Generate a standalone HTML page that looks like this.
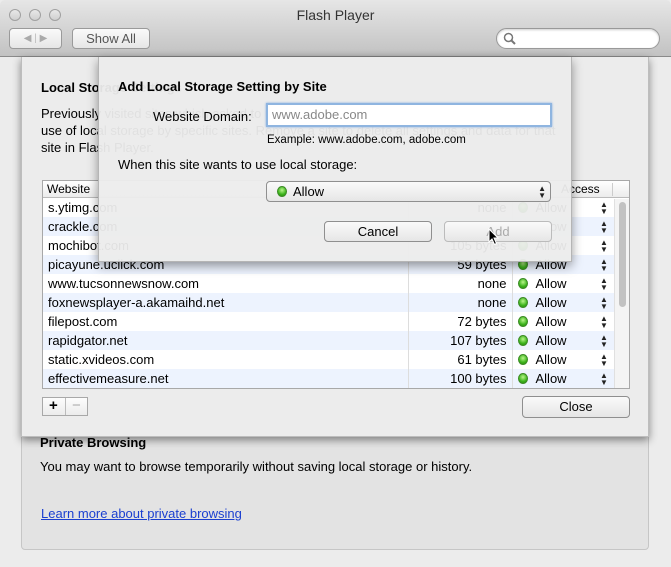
<!DOCTYPE html>
<html><head><meta charset="utf-8"><style>
*{box-sizing:border-box;margin:0;padding:0}
body{width:671px;height:567px;overflow:hidden;background:#ececec;font-family:"Liberation Sans",sans-serif;font-size:13px;color:#000;position:relative}
.abs{position:absolute}
#title{left:0;top:0;width:671px;height:57px;background:linear-gradient(#e6e6e6,#c2c2c2);border-bottom:1px solid #8a8a8a;border-radius:5px 5px 0 0}
.light{width:12px;height:12px;border-radius:50%;border:1px solid #a0a0a0;background:linear-gradient(#e8e8e8,#cfcfcf);top:9px}
.btn{border:1px solid #9a9a9a;border-radius:4px;background:linear-gradient(#fafafa,#e6e6e6);text-align:center}
#group{left:21px;top:60px;width:628px;height:490px;background:#e3e3e3;border:1px solid #c6c6c6;border-radius:4px}
#sheet{left:21px;top:57px;width:628px;height:380px;background:#ececec;box-shadow:0 3px 8px rgba(0,0,0,.45);border:1px solid #bdbdbd;border-top:none}
table{border-collapse:collapse;font-size:13px}
td{height:19px;padding:0 5px;white-space:nowrap}
tr:nth-child(even) td{background:#edf3fe}
tr:nth-child(odd) td{background:#fff}
.dot{display:inline-block;width:10px;height:11px;border-radius:50%;background:radial-gradient(circle at 50% 35%,#b8f58a,#3cb31c 60%,#2a8a10);vertical-align:-1px;margin-right:8px;border:1px solid #3b8a25}
.arr{font-size:8px;line-height:7px;display:inline-block;text-align:center;vertical-align:middle;color:#222}
#dlg{left:98px;top:57px;width:474px;height:205px;background:rgba(236,236,236,.95);box-shadow:0 4px 10px rgba(0,0,0,.4);border:1px solid #b5b5b5;border-top:none}
</style></head><body>
<div id="title" class="abs">
  <div class="abs light" style="left:9px"></div>
  <div class="abs light" style="left:29px"></div>
  <div class="abs light" style="left:49px"></div>
  <div class="abs" style="left:0;width:671px;top:7px;text-align:center;font-size:14px;color:#333">Flash Player</div>
  <div class="abs btn" style="left:9px;top:28px;width:53px;height:21px;color:#aaa;font-size:10px;line-height:19px">◀ <span style="color:#bbb">|</span> ▶</div>
  <div class="abs btn" style="left:72px;top:28px;width:78px;height:21px;color:#555;font-size:13px;line-height:19px">Show All</div>
  <div class="abs" style="left:496px;top:28px;width:164px;height:21px;border:1px solid #999;border-radius:11px;background:#fff;box-shadow:inset 0 1px 2px rgba(0,0,0,.2)">
    <svg class="abs" style="left:6px;top:3px" width="14" height="14"><circle cx="5.5" cy="5.5" r="4" fill="none" stroke="#777" stroke-width="1.5"/><line x1="8.5" y1="8.5" x2="12" y2="12" stroke="#777" stroke-width="2"/></svg>
  </div>
</div>
<div id="group" class="abs">
  <div class="abs" style="left:18px;top:374px;font-weight:bold">Private Browsing</div>
  <div class="abs" style="left:18px;top:398px">You may want to browse temporarily without saving local storage or history.</div>
  <div class="abs" style="left:19px;top:445px;color:#1a3fd0;text-decoration:underline">Learn more about private browsing</div>
</div>
<div id="sheet" class="abs">
  <div class="abs" style="left:19px;top:23px;font-weight:bold">Local Storage Settings</div>
  <div class="abs" style="left:19px;top:48px;width:590px;line-height:17px">Previously visited sites which asked to use local storage are listed. Block the<br>use of local storage by specific sites. Remove a site to delete all settings and data for that<br>site in Flash Player.</div>
  <div class="abs" style="left:20px;top:123px;width:588px;height:209px;border:1px solid #a8a8a8;background:#fff;overflow:hidden">
    <div style="height:17px;border-bottom:1px solid #bbb;background:linear-gradient(#fff,#ececec);font-size:12px;line-height:16px;padding-left:4px;position:relative">Website<span class="abs" style="left:518px">Access</span><span class="abs" style="left:569px;top:2px;height:13px;border-left:1px solid #ccc"></span></div>
    <table style="width:571px">
      <colgroup><col style="width:365px"><col style="width:104px"><col style="width:102px"></colgroup>
      <tr><td>s.ytimg.com</td><td style="text-align:right;border-left:1px solid #ddd">none</td><td style="border-left:1px solid #ddd"><span class="dot"></span>Allow</td></tr>
      <tr><td>crackle.com</td><td style="text-align:right;border-left:1px solid #ddd">none</td><td style="border-left:1px solid #ddd"><span class="dot"></span>Allow</td></tr>
      <tr><td>mochibot.com</td><td style="text-align:right;border-left:1px solid #ddd">105 bytes</td><td style="border-left:1px solid #ddd"><span class="dot"></span>Allow</td></tr>
      <tr><td>picayune.uclick.com</td><td style="text-align:right;border-left:1px solid #ddd">59 bytes</td><td style="border-left:1px solid #ddd"><span class="dot"></span>Allow</td></tr>
      <tr><td>www.tucsonnewsnow.com</td><td style="text-align:right;border-left:1px solid #ddd">none</td><td style="border-left:1px solid #ddd"><span class="dot"></span>Allow</td></tr>
      <tr><td>foxnewsplayer-a.akamaihd.net</td><td style="text-align:right;border-left:1px solid #ddd">none</td><td style="border-left:1px solid #ddd"><span class="dot"></span>Allow</td></tr>
      <tr><td>filepost.com</td><td style="text-align:right;border-left:1px solid #ddd">72 bytes</td><td style="border-left:1px solid #ddd"><span class="dot"></span>Allow</td></tr>
      <tr><td>rapidgator.net</td><td style="text-align:right;border-left:1px solid #ddd">107 bytes</td><td style="border-left:1px solid #ddd"><span class="dot"></span>Allow</td></tr>
      <tr><td>static.xvideos.com</td><td style="text-align:right;border-left:1px solid #ddd">61 bytes</td><td style="border-left:1px solid #ddd"><span class="dot"></span>Allow</td></tr>
      <tr><td>effectivemeasure.net</td><td style="text-align:right;border-left:1px solid #ddd">100 bytes</td><td style="border-left:1px solid #ddd"><span class="dot"></span>Allow</td></tr>
    </table>
    <div class="abs" style="left:555px;top:18px;width:16px;height:190px">
      <div class="arr" style="position:absolute;left:2px;top:2px">▲<br>▼</div><div class="arr" style="position:absolute;left:2px;top:21px">▲<br>▼</div><div class="arr" style="position:absolute;left:2px;top:40px">▲<br>▼</div><div class="arr" style="position:absolute;left:2px;top:59px">▲<br>▼</div><div class="arr" style="position:absolute;left:2px;top:78px">▲<br>▼</div><div class="arr" style="position:absolute;left:2px;top:97px">▲<br>▼</div><div class="arr" style="position:absolute;left:2px;top:116px">▲<br>▼</div><div class="arr" style="position:absolute;left:2px;top:135px">▲<br>▼</div><div class="arr" style="position:absolute;left:2px;top:154px">▲<br>▼</div><div class="arr" style="position:absolute;left:2px;top:173px">▲<br>▼</div>
    </div>
    <div class="abs" style="left:571px;top:18px;width:16px;height:190px;background:#f4f4f4;border-left:1px solid #e0e0e0"><div style="margin:3px 4px;width:7px;height:105px;border-radius:4px;background:#c2c2c2"></div></div>
  </div>
  <div class="abs" style="left:20px;top:340px;width:46px;height:19px;border:1px solid #a8a8a8;background:linear-gradient(#fdfdfd,#ececec)">
    <span class="abs" style="left:6px;top:-1px;font-size:15px;font-weight:bold">+</span>
    <span class="abs" style="left:22px;top:0;height:17px;border-left:1px solid #bbb"></span>
    <span class="abs" style="left:29px;top:-1px;font-size:15px;color:#aaa">−</span>
  </div>
  <div class="abs btn" style="left:500px;top:339px;width:108px;height:22px;line-height:20px;border-color:#8f8f8f">Close</div>
</div>
<div id="dlg" class="abs">
  <div class="abs" style="left:19px;top:22px;font-weight:bold">Add Local Storage Setting by Site</div>
  <div class="abs" style="left:54px;top:52px">Website Domain:</div>
  <div class="abs" style="left:167px;top:46px;width:286px;height:24px;border:2px solid #8fb5e0;background:#fff;color:#888;padding:1px 4px;line-height:18px;box-shadow:0 0 2px #7aa7df">www.adobe.com</div>
  <div class="abs" style="left:168px;top:77px;font-size:11.5px">Example: www.adobe.com, adobe.com</div>
  <div class="abs" style="left:19px;top:100px">When this site wants to use local storage:</div>
  <div class="abs btn" style="left:167px;top:124px;width:285px;height:21px;line-height:19px;text-align:left;padding-left:10px;border-color:#8f8f8f"><span class="dot" style="margin-right:6px"></span>Allow<span class="arr abs" style="right:4px;top:3px">▲<br>▼</span></div>
  <div class="abs btn" style="left:225px;top:164px;width:108px;height:21px;line-height:19px;border-color:#8f8f8f">Cancel</div>
  <div class="abs btn" style="left:345px;top:164px;width:108px;height:21px;line-height:19px;color:#aaa;border-color:#bbb">Add</div>
  <svg class="abs" style="left:389px;top:171px" width="12" height="18"><path d="M1 1 L1 14 L4 11 L6.5 16.5 L8.5 15.5 L6 10 L10 10 Z" fill="#000" stroke="#fff" stroke-width="1"/></svg>
</div>
</body></html>
